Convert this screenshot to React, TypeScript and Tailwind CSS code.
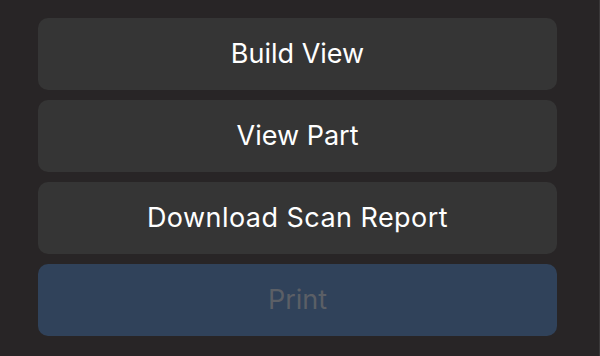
export default function App() {
  const btn =
    "h-[72px] w-full rounded-[10px] bg-[#353535] text-white text-[27px] flex items-center justify-center";
  return (
    <div
      className="w-[600px] h-[356px] bg-[#282526] border-r border-[#3a3839] pt-[18px] pl-[38px] pr-[42px] flex flex-col gap-[10px]"
      style={{ fontFamily: "Inter, 'Noto Sans', sans-serif" }}
    >
      <button className={btn}>Build View</button>
      <button className={btn}>View Part</button>
      <button className={btn}>
        <span className="tracking-[0.45px]">Download Scan Report</span>
      </button>
      <button className="h-[72px] w-full rounded-[10px] bg-[#30425a] text-[#5b5f66] text-[27px] flex items-center justify-center">
        Print
      </button>
    </div>
  );
}
